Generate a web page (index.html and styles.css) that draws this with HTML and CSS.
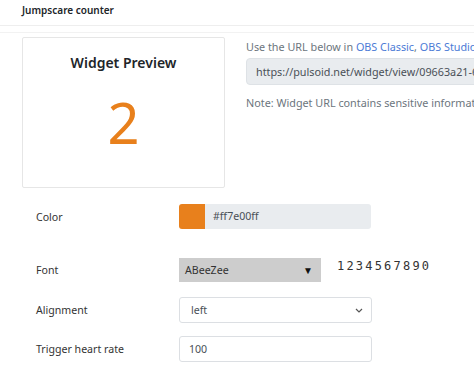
FILE: index.html
```html
<!DOCTYPE html>
<html lang="en">
  <head>
    <title>Jumpscare counter</title>
    <meta charset="utf-8" />
    <link rel="stylesheet" href="styles.css">
  </head>
  <body>
    <div class="topbar">Jumpscare counter</div>
    <div class="panel">
      <section class="widget-row">
        <div class="preview-card">
          <h2>Widget Preview</h2>
          <div class="counter">2</div>
        </div>
        <div class="url-info">
          <p class="hint">
            Use the URL below in <a href="#">OBS Classic</a>, <a href="#">OBS Studio</a>
          </p>
          <div class="url-box">https://pulsoid.net/widget/view/09663a21-6</div>
          <p class="hint note">Note: Widget URL contains sensitive informati</p>
        </div>
      </section>

      <div class="form-row row-color">
        <label>Color</label>
        <div class="color-field">
          <span class="swatch"></span>
          <span class="color-value">#ff7e00ff</span>
        </div>
      </div>

      <div class="form-row row-font">
        <label>Font</label>
        <div class="font-select">
          <span>ABeeZee</span>
          <span class="caret">&#9660;</span>
        </div>
        <span class="font-sample">1234567890</span>
      </div>

      <div class="form-row row-align">
        <label>Alignment</label>
        <div class="field select-field">
          <span>left</span>
          <svg width="8" height="5" viewBox="0 0 8 5"><path d="M1 1l3 3 3-3" fill="none" stroke="#555" stroke-width="1.2"/></svg>
        </div>
      </div>

      <div class="form-row row-rate">
        <label>Trigger heart rate</label>
        <div class="field">100</div>
      </div>
    </div>
  </body>
</html>
```

FILE: styles.css
```css
html,
body {
  margin: 0;
  overflow: hidden;
}

body {
  font-family: "Noto Sans", "Open Sans", sans-serif;
  color: #212529;
  background: #fff;
  width: 474px;
  height: 365px;
}

.topbar {
  height: 26px;
  box-sizing: border-box;
  padding: 3px 0 0 22px;
  font-size: 10px;
  font-weight: 600;
  border-bottom: 1px solid #eee;
}

.panel {
  margin-top: 6px;
  border-top: 1px solid #f2f2f2;
  padding-top: 4px;
}

.widget-row {
  display: flex;
  padding-left: 22px;
}

.preview-card {
  flex: none;
  width: 201px;
  height: 149px;
  border: 1px solid #e6e6e6;
  border-radius: 2px;
  text-align: center;
}

.preview-card h2 {
  margin: 15px 0 0;
  font-size: 14px;
  font-weight: 600;
}

.counter {
  margin-top: 20px;
  font-size: 56px;
  line-height: 60px;
  color: #e8801c;
}

.url-info {
  flex: none;
  width: 320px;
  margin-left: 21px;
  white-space: nowrap;
}

.hint {
  margin: 2px 0 0;
  font-size: 10.8px;
  color: #6c757d;
}

.hint a {
  color: #4b7bd6;
  text-decoration: none;
}

.url-box {
  margin-top: 4px;
  height: 25px;
  line-height: 25px;
  padding-left: 9px;
  background: #e9ecef;
  border: 1px solid #dee2e6;
  border-radius: 4px;
  font-size: 10.8px;
  color: #495057;
  overflow: hidden;
}

.note {
  margin-top: 10px;
}

.form-row {
  display: flex;
  align-items: center;
  padding-left: 36px;
  font-size: 10.6px;
}

.form-row label {
  flex: none;
  width: 143px;
  color: #333;
}

.row-color {
  margin-top: 16px;
}

.row-font {
  margin-top: 29px;
}

.row-align {
  margin-top: 15px;
}

.row-rate {
  margin-top: 13px;
}

.color-field {
  display: flex;
  width: 192px;
  height: 25px;
}

.swatch {
  width: 26px;
  background: #e8801c;
  border-radius: 3px 0 0 3px;
}

.color-value {
  flex: 1;
  padding-left: 8px;
  line-height: 25px;
  background: #e9ecef;
  color: #495057;
  border-radius: 0 3px 3px 0;
}

.font-select {
  display: flex;
  justify-content: space-between;
  align-items: center;
  box-sizing: border-box;
  width: 142px;
  height: 24px;
  padding: 0 8px 0 6px;
  background: #cdcdcd;
  color: #333;
}

.caret {
  font-size: 10px;
  color: #111;
}

.font-sample {
  margin: -8px 0 0 16px;
  font-family: "DejaVu Sans Mono", monospace;
  font-size: 12px;
  letter-spacing: 2.2px;
  color: #333;
}

.field {
  box-sizing: border-box;
  width: 193px;
  height: 26px;
  line-height: 24px;
  padding-left: 9px;
  border: 1px solid #dcdfe3;
  border-radius: 3px;
  color: #495057;
}

.select-field {
  display: flex;
  justify-content: space-between;
  align-items: center;
  padding: 0 8px 0 11px;
}
```
